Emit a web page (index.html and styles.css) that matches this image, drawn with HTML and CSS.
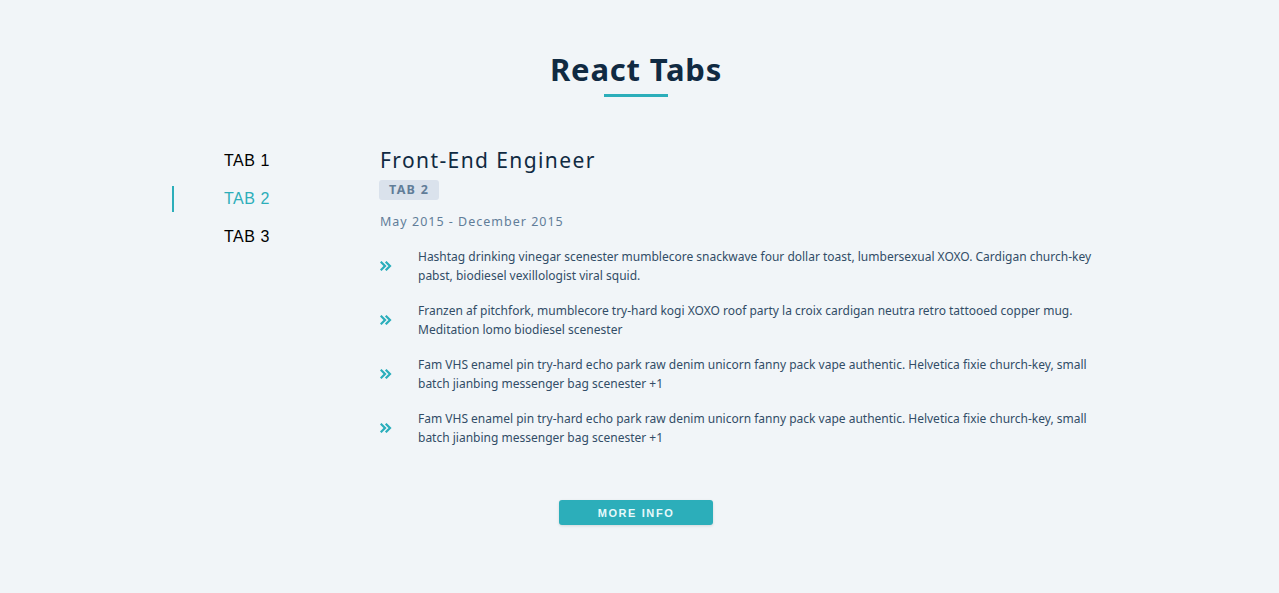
FILE: index.html
```html
<!DOCTYPE html>
<html lang="en">
<head>
<meta charset="utf-8">
<title>React Tabs</title>
<link rel="stylesheet" href="styles.css">
</head>
<body>
<section class="page">
  <header class="header">
    <h1 class="title">React Tabs</h1>
    <div class="underline"></div>
  </header>
  <div class="tabs">
    <ul class="tab-list">
      <li class="tab">TAB 1</li>
      <li class="tab active">TAB 2</li>
      <li class="tab">TAB 3</li>
    </ul>
    <article class="panel">
      <h3 class="job">Front-End Engineer</h3>
      <span class="badge">TAB 2</span>
      <p class="date">May 2015 - December 2015</p>
      <div class="duties">
        <div class="duty">
          <svg class="icon" viewBox="0 0 12 10" width="12" height="10"><path d="M1.5 1.5 L5 5 L1.5 8.5 M6.5 1.5 L10 5 L6.5 8.5" fill="none" stroke="#2aaebb" stroke-width="2.2" stroke-linecap="square"/></svg>
          <p>Hashtag drinking vinegar scenester mumblecore snackwave four dollar toast, lumbersexual XOXO. Cardigan church-key pabst, biodiesel vexillologist viral squid.</p>
        </div>
        <div class="duty">
          <svg class="icon" viewBox="0 0 12 10" width="12" height="10"><path d="M1.5 1.5 L5 5 L1.5 8.5 M6.5 1.5 L10 5 L6.5 8.5" fill="none" stroke="#2aaebb" stroke-width="2.2" stroke-linecap="square"/></svg>
          <p>Franzen af pitchfork, mumblecore try-hard kogi XOXO roof party la croix cardigan neutra retro tattooed copper mug. Meditation lomo biodiesel scenester</p>
        </div>
        <div class="duty">
          <svg class="icon" viewBox="0 0 12 10" width="12" height="10"><path d="M1.5 1.5 L5 5 L1.5 8.5 M6.5 1.5 L10 5 L6.5 8.5" fill="none" stroke="#2aaebb" stroke-width="2.2" stroke-linecap="square"/></svg>
          <p>Fam VHS enamel pin try-hard echo park raw denim unicorn fanny pack vape authentic. Helvetica fixie church-key, small batch jianbing messenger bag scenester +1</p>
        </div>
        <div class="duty">
          <svg class="icon" viewBox="0 0 12 10" width="12" height="10"><path d="M1.5 1.5 L5 5 L1.5 8.5 M6.5 1.5 L10 5 L6.5 8.5" fill="none" stroke="#2aaebb" stroke-width="2.2" stroke-linecap="square"/></svg>
          <p>Fam VHS enamel pin try-hard echo park raw denim unicorn fanny pack vape authentic. Helvetica fixie church-key, small batch jianbing messenger bag scenester +1</p>
        </div>
      </div>
    </article>
  </div>
  <div class="actions">
    <button class="btn" type="button">MORE INFO</button>
  </div>
</section>
</body>
</html>
```

FILE: styles.css
```css
* { box-sizing: border-box; }
html, body { margin: 0; padding: 0; }
body {
  background: #f1f5f8;
  font-family: "Noto Sans", "Open Sans", sans-serif;
  color: #324d67;
  min-height: 593px;
}
.page {
  padding-top: 48px;
}
.header {
  display: flex;
  flex-direction: column;
  align-items: center;
  margin-left: -7px;
}
.title {
  margin: 0;
  font-size: 31px;
  line-height: 42px;
  font-weight: 700;
  letter-spacing: 0.8px;
  color: #102a42;
}
.underline {
  width: 64px;
  height: 3px;
  background: #2caeba;
  margin-top: 4px;
}
.tabs {
  width: 935px;
  margin: 51px auto 0;
  display: flex;
}
.tab-list {
  list-style: none;
  margin: 0;
  padding: 0;
  width: 208px;
  flex: none;
}
.tab {
  font-family: "Liberation Sans", Arial, sans-serif;
  font-size: 16px;
  letter-spacing: 0.5px;
  color: #000;
  height: 26px;
  line-height: 26px;
  margin-bottom: 12px;
  padding-left: 50px;
  border-left: 2px solid transparent;
}
.tab.active {
  color: #2caeba;
  border-left-color: #2caeba;
}
.panel {
  flex: 1;
  min-width: 0;
  margin-top: -1px;
}
.job {
  margin: 0;
  font-size: 21px;
  line-height: 26px;
  font-weight: 400;
  letter-spacing: 1.4px;
  color: #102a42;
}
.badge {
  display: inline-block;
  margin-top: 7px;
  margin-left: -1px;
  background: #dae2ec;
  color: #617d98;
  font-size: 12.5px;
  font-weight: 700;
  letter-spacing: 1.3px;
  line-height: 20px;
  padding: 0 10px;
  border-radius: 3px;
}
.date {
  margin: 12px 0 0;
  font-size: 12.5px;
  line-height: 20px;
  letter-spacing: 1px;
  color: #617d98;
}
.duties {
  margin-top: 15px;
}
.duty {
  display: flex;
  align-items: center;
  margin-bottom: 16px;
}
.icon {
  flex: none;
  width: 12px;
  height: 10px;
  margin-right: 26px;
}
.duty p {
  margin: 0;
  font-size: 12px;
  line-height: 19px;
  color: #324d67;
  max-width: 690px;
}
.actions {
  display: flex;
  justify-content: center;
  margin-top: 37px;
  margin-left: -7px;
}
.btn {
  width: 154px;
  height: 25px;
  border: 0;
  border-radius: 3px;
  background: #2caeba;
  color: #e6f9fb;
  font-family: "Liberation Sans", Arial, sans-serif;
  font-size: 11px;
  font-weight: 700;
  letter-spacing: 1.6px;
  box-shadow: 0 1px 3px rgba(0,0,0,0.12);
  padding: 0;
}
```
